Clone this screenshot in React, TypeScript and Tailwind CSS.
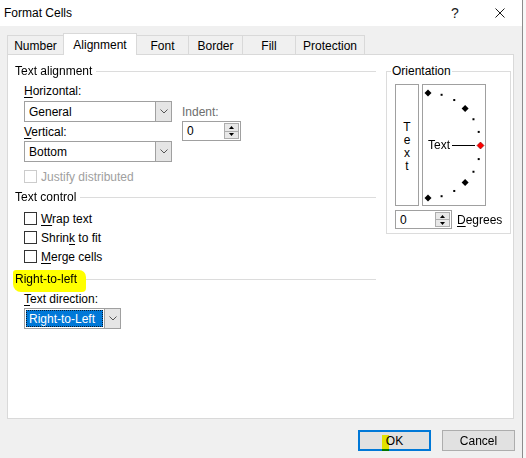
import React from 'react';

// Small dropdown arrow used by the combo boxes
function Chevron() {
  return (
    <svg width="8" height="5" viewBox="0 0 8 5">
      <polyline points="0.5,0.5 4,4 7.5,0.5" fill="none" stroke="#555555" strokeWidth="1" />
    </svg>
  );
}

function Arrow({ up }: { up?: boolean }) {
  return (
    <svg width="5" height="3" viewBox="0 0 5 3">
      <polygon points={up ? '0,3 2.5,0 5,3' : '0,0 5,0 2.5,3'} fill="#000000" />
    </svg>
  );
}

function Select({ value, className, focused }: { value: string; className: string; focused?: boolean }) {
  return (
    <div className={`flex h-[21px] border border-[#a0a0a0] bg-white ${className}`}>
      {focused ? (
        <div className="flex-1 m-[1px] flex items-center pl-[2px] bg-[#0078d7] text-white border border-dotted border-[#0a1a2a]">
          {value}
        </div>
      ) : (
        <div className="flex-1 flex items-center pl-[4px]">{value}</div>
      )}
      <div className="w-[16px] border-l border-[#a0a0a0] bg-[#e5e5e5] flex items-center justify-center">
        <Chevron />
      </div>
    </div>
  );
}

function Spinner({ className }: { className: string }) {
  return (
    <div className={`flex border border-[#a0a0a0] bg-white ${className}`}>
      <div className="flex-1 flex items-center pl-[4px]">0</div>
      <div className="w-[17px] flex flex-col p-[1px]">
        <div className="flex-1 border border-[#adadad] bg-[#e8e8e8] flex items-center justify-center">
          <Arrow up />
        </div>
        <div className="flex-1 -mt-px border border-[#adadad] bg-[#e8e8e8] flex items-center justify-center">
          <Arrow />
        </div>
      </div>
    </div>
  );
}

function Heading({ children }: { children: React.ReactNode }) {
  return (
    <div className="flex items-center h-[14px]">
      <span className="relative z-10 whitespace-nowrap">{children}</span>
      <div className="flex-1 h-px bg-[#dcdcdc] ml-[4px]" />
    </div>
  );
}

function Check({ children, disabled, className = '' }: { children: React.ReactNode; disabled?: boolean; className?: string }) {
  return (
    <div className={`flex items-center h-[13px] ml-[9px] ${className}`}>
      <div className={`w-[13px] h-[13px] border bg-white ${disabled ? 'border-[#cccccc]' : 'border-[#333333]'}`} />
      <span className={`ml-[4px] ${disabled ? 'text-[#a0a0a0]' : ''}`}>{children}</span>
    </div>
  );
}

function Key({ children }: { children: React.ReactNode }) {
  return <span className="underline decoration-1 underline-offset-[2px]">{children}</span>;
}

// Rotation dial: points every 15 degrees on a half circle
function Dial() {
  const cx = 5;
  const cy = 60.5;
  const r = 52.5;
  const d = 3.5;
  const marks = [];
  for (let a = -90; a <= 90; a += 15) {
    const rad = (a * Math.PI) / 180;
    const x = cx + r * Math.cos(rad);
    const y = cy - r * Math.sin(rad);
    const diamond = `${x},${y - d} ${x + d},${y} ${x},${y + d} ${x - d},${y}`;
    if (a === 0) {
      marks.push(<polygon key={a} points={diamond} fill="#ff0000" stroke="#800000" strokeWidth="0.6" />);
    } else if (a % 45 === 0) {
      marks.push(<polygon key={a} points={diamond} fill="#000000" />);
    } else {
      marks.push(<rect key={a} x={x - 1} y={y - 1} width="2" height="2" fill="#000000" />);
    }
  }
  return (
    <svg className="absolute inset-0" width="62" height="120" viewBox="0 0 62 120">
      {marks}
    </svg>
  );
}

const tabs = [
  { label: 'Number', w: 'w-[57px]' },
  { label: 'Alignment', w: 'w-[74px]', active: true },
  { label: 'Font', w: 'w-[53px]' },
  { label: 'Border', w: 'w-[55px]' },
  { label: 'Fill', w: 'w-[54px]' },
  { label: 'Protection', w: 'w-[70px]' },
];

export default function App() {
  return (
    <div className="flex w-[526px] h-[458px] overflow-hidden text-[12px] leading-[14px] text-black font-['Liberation_Sans',Arial,sans-serif]">
      <div className="flex flex-col w-[523px] h-full border-r border-[#8c8c8c] bg-[#f0f0f0]">
        {/* Title bar */}
        <div className="flex items-center h-[26px] bg-white pl-[4px] pr-[17px]">
          <span>Format Cells</span>
          <div className="flex-1" />
          <span className="w-[20px] text-center text-[14px] text-[#1a1a1a]">?</span>
          <svg className="ml-[30px]" width="10" height="10" viewBox="0 0 10 10">
            <path d="M0.5 0.5 L9.5 9.5 M9.5 0.5 L0.5 9.5" stroke="#1a1a1a" strokeWidth="1" />
          </svg>
        </div>

        {/* Tabs */}
        <div className="flex items-end h-[22px] mt-[7px] pl-[7px]">
          {tabs.map((t, i) => (
            <div
              key={t.label}
              className={`flex items-center justify-center border-t border-l border-r border-[#d9d9d9] ${t.w} ${i > 0 ? '-ml-px' : ''} ${
                t.active ? 'relative z-10 h-[22px] bg-white' : 'h-[20px] bg-[#f0f0f0]'
              }`}
            >
              {t.label}
            </div>
          ))}
        </div>

        {/* Tab page */}
        <div className="flex items-start -mt-px mx-[7px] w-[507px] h-[365px] border border-[#d9d9d9] bg-white pl-[7px] pt-[9px]">
          <div className="flex flex-col w-[361px]">
            <Heading>Text alignment</Heading>

            <div className="flex mt-[6px] ml-[9px]">
              <div className="flex flex-col">
                <span>
                  <Key>H</Key>orizontal:
                </span>
                <Select value="General" className="w-[148px] mt-[3px]" />
                <span className="mt-[3px]">
                  <Key>V</Key>ertical:
                </span>
                <Select value="Bottom" className="w-[148px] mt-[2px]" />
              </div>
              <div className="flex flex-col ml-[10px] pt-[21px]">
                <span className="text-[#6e6e6e]">Indent:</span>
                <Spinner className="w-[59px] h-[20px] mt-[2px]" />
              </div>
            </div>

            <Check disabled className="mt-[8px]">
              Justify distributed
            </Check>

            <div className="mt-[7px]">
              <Heading>Text control</Heading>
            </div>
            <Check className="mt-[8px]">
              <Key>W</Key>rap text
            </Check>
            <Check className="mt-[6px]">
              Shrin<Key>k</Key> to fit
            </Check>
            <Check className="mt-[6px]">
              <Key>M</Key>erge cells
            </Check>

            <div className="relative mt-[9px]">
              {/* highlighter stroke behind the heading */}
              <div className="absolute left-[-2px] top-[-2px] w-[73px] h-[22px] bg-[#ffff00] rounded-tl-[3px] rounded-tr-[7px] rounded-br-[4px] rounded-bl-[8px]" />
              <Heading>Right-to-left</Heading>
            </div>
            <span className="mt-[6px] ml-[9px]">
              <Key>T</Key>ext direction:
            </span>
            <Select value="Right-to-Left" focused className="w-[97px] mt-[2px] ml-[9px]" />
          </div>

          {/* Orientation group */}
          <fieldset className="ml-[10px] w-[121px] border border-[#dcdcdc] px-[8px] pb-[4px]">
            <legend className="-ml-[4px] px-[1px]">Orientation</legend>
            <div className="flex mt-[6px]">
              <div className="flex flex-col items-center justify-center w-[24px] h-[122px] border border-[#a0a0a0] leading-[13px] pt-[3px]">
                <span>T</span>
                <span>e</span>
                <span>x</span>
                <span>t</span>
              </div>
              <div className="relative flex items-center ml-[3px] w-[64px] h-[122px] border border-[#a0a0a0] pl-[5px]">
                <Dial />
                <span className="relative">Text</span>
                <div className="relative ml-[2px] w-[23px] h-px bg-black" />
              </div>
            </div>
            <div className="flex items-center mt-[4px]">
              <Spinner className="w-[57px] h-[19px]" />
              <span className="ml-[5px]">
                <Key>D</Key>egrees
              </span>
            </div>
          </fieldset>
        </div>

        {/* Dialog buttons */}
        <div className="flex justify-end gap-[11px] mt-[11px] pr-[7px]">
          <button className="relative w-[73px] h-[21px] border-2 border-[#0078d7] bg-[#e1e1e1] flex items-center justify-center">
            <span className="absolute left-[22px] top-[3px] w-[7px] h-[16px] bg-[#ffff00] mix-blend-multiply" />
            OK
          </button>
          <button className="w-[73px] h-[21px] border border-[#adadad] bg-[#e1e1e1] flex items-center justify-center">
            Cancel
          </button>
        </div>
      </div>
      <div className="w-[3px] h-full bg-[#f7f7f7]" />
    </div>
  );
}
